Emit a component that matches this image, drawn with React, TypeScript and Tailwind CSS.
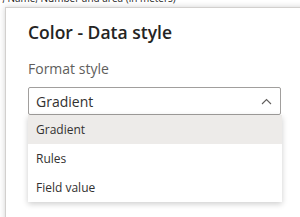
import React from "react";

export default function App() {
  const font = { fontFamily: '"Segoe UI", "Open Sans", "Noto Sans", sans-serif' };
  return (
    <div className="relative w-[300px] h-[217px] overflow-hidden bg-white" style={font}>
      <div className="absolute left-0 top-[-8px] text-[10px] leading-[12px] text-[#252423] whitespace-nowrap">
        ', Name, Number and area (in meters)
      </div>
      <div className="absolute left-[5px] top-[7px] w-[320px] h-[240px] bg-white border-l border-t border-[#d2d0ce] shadow-[0_0_6px_rgba(0,0,0,0.18)] pl-[22px] pt-[12px]">
        <div className="text-[17.5px] leading-[24px] font-semibold text-[#252423]">Color - Data style</div>
        <div className="mt-[15px] text-[14px] leading-[20px] text-[#605e5c]">Format style</div>
        <div className="mt-[8px] w-[253px] h-[28px] border border-[#a19f9d] rounded-[2px] flex items-center justify-between pl-[7px] pr-[8px] text-[14px] text-[#323130]">
          <span>Gradient</span>
          <svg width="11" height="7" viewBox="0 0 11 7" fill="none">
            <path d="M1 6 L5.5 1.5 L10 6" stroke="#605e5c" strokeWidth="1.1" />
          </svg>
        </div>
        <div className="w-[254px] bg-white shadow-[0_2px_6px_rgba(0,0,0,0.2)] text-[12px] text-[#323130]">
          <div className="h-[29px] flex items-center pl-[8px] bg-[#edebe9]">Gradient</div>
          <div className="h-[29px] flex items-center pl-[8px]">Rules</div>
          <div className="h-[29px] flex items-center pl-[8px]">Field value</div>
        </div>
      </div>
    </div>
  );
}
